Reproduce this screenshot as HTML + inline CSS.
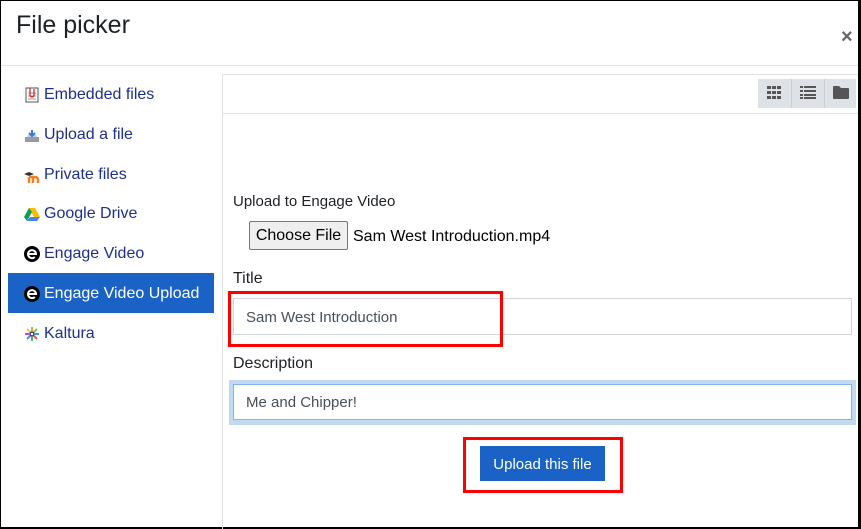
<!DOCTYPE html>
<html><head><meta charset="utf-8"><style>
*{box-sizing:border-box;margin:0;padding:0}
body{width:861px;height:529px;background:#fff;font-family:"Liberation Sans",Arial,sans-serif;position:relative;overflow:hidden;color:#1d2125}
.a{position:absolute}
.frame{left:0;top:0;width:861px;height:529px;border-left:1px solid #000;border-top:1px solid #000;border-right:3px solid #000;border-bottom:2px solid #000}
.nav{left:8px;width:206px;height:40px;font-size:16px;color:#1d2f8f;line-height:42px;padding-left:36px}
.nav.sel{background:#1a62c5;color:#fff}
.ic{position:absolute;left:16px;top:13px;width:16px;height:16px}
.lbl{font-size:15px;color:#1d2125}
</style></head><body>
<div class="a frame"></div>
<div class="a" style="left:16px;top:11px;font-size:25px;color:#1d2125">File picker</div>
<div class="a" style="left:841px;top:26px;font-size:20px;font-weight:bold;color:#666">×</div>
<div class="a" style="left:1px;top:65px;width:857px;height:1px;background:#dee2e6"></div>

<div class="a nav" style="top:74px"><svg class="ic" viewBox="0 0 16 16"><rect x="2" y="1" width="12" height="14" fill="#fff" stroke="#555"/><path d="M4 6h8M4 9h8M4 12h8" stroke="#999"/><path d="M6 1v7a2 2 0 0 0 4 0V2" fill="none" stroke="#d22" stroke-width="1.3"/></svg>Embedded files</div>
<div class="a nav" style="top:114px"><svg class="ic" viewBox="0 0 16 16"><path d="M1 10h14v5H1z" fill="#99a"/><path d="M3 10l2-4h6l2 4" fill="#ccd"/><path d="M8 3v6M5 6l3 3 3-3" stroke="#3a7bd5" stroke-width="2" fill="none"/></svg>Upload a file</div>
<div class="a nav" style="top:154px"><svg class="ic" viewBox="0 0 16 16"><path d="M0 7l5-2 5 2-5 2z" fill="#333"/><path d="M5 10v6M5 10h6a3 3 0 0 1 3 3v3M9 10v6" stroke="#f47f20" stroke-width="2.4" fill="none"/></svg>Private files</div>
<div class="a nav" style="top:193px"><svg class="ic" viewBox="0 0 16 16"><path d="M5 2h6l5 9H10z" fill="#fbbc04"/><path d="M5 2l-5 9 3 4 5-9z" fill="#0f9d58"/><path d="M3 15h10l3-4H6z" fill="#4285f4"/></svg>Google Drive</div>
<div class="a nav" style="top:233px"><svg class="ic" viewBox="0 0 16 16"><circle cx="8" cy="8" r="8" fill="#000"/><path d="M4 8h8a4 4 0 1 0-1.2 3" stroke="#fff" stroke-width="2" fill="none"/></svg>Engage Video</div>
<div class="a nav sel" style="top:273px"><svg class="ic" viewBox="0 0 16 16"><circle cx="8" cy="8" r="8" fill="#000"/><path d="M4 8h8a4 4 0 1 0-1.2 3" stroke="#fff" stroke-width="2" fill="none"/></svg>Engage Video Upload</div>
<div class="a nav" style="top:313px"><svg class="ic" viewBox="0 0 16 16"><g stroke-width="2"><path d="M8 1v4" stroke="#e94"/><path d="M8 11v4" stroke="#4b6"/><path d="M1 8h4" stroke="#c4d"/><path d="M11 8h4" stroke="#49c"/><path d="M3 3l3 3" stroke="#ec3"/><path d="M13 13l-3-3" stroke="#e54"/><path d="M13 3l-3 3" stroke="#6c4"/><path d="M3 13l3-3" stroke="#58d"/></g><circle cx="8" cy="8" r="2" fill="none" stroke="#247" stroke-width="1.5"/></svg>Kaltura</div>

<div class="a" style="left:222px;top:74px;width:1px;height:455px;background:#dee2e6"></div>
<div class="a" style="left:222px;top:74px;width:636px;height:1px;background:#dee2e6"></div>
<div class="a" style="left:222px;top:113px;width:636px;height:1px;background:#dee2e6"></div>
<div class="a" style="left:758px;top:79px;width:98px;height:29px;background:#dee2e6"></div>
<div class="a" style="left:791px;top:79px;width:1px;height:29px;background:#ccd0d4"></div>
<div class="a" style="left:824px;top:79px;width:1px;height:29px;background:#ccd0d4"></div>
<svg class="a" style="left:767px;top:86px" width="15" height="13" viewBox="0 0 15 13" fill="#555"><rect x="0" y="0" width="4" height="3"/><rect x="5" y="0" width="4" height="3"/><rect x="10" y="0" width="4" height="3"/><rect x="0" y="5" width="4" height="3"/><rect x="5" y="5" width="4" height="3"/><rect x="10" y="5" width="4" height="3"/><rect x="0" y="10" width="4" height="3"/><rect x="5" y="10" width="4" height="3"/><rect x="10" y="10" width="4" height="3"/></svg>
<svg class="a" style="left:800px;top:86px" width="16" height="13" viewBox="0 0 16 13" fill="#555"><rect x="0" y="0" width="3" height="2"/><rect x="4" y="0" width="12" height="2"/><rect x="0" y="4" width="3" height="2"/><rect x="4" y="4" width="12" height="2"/><rect x="0" y="8" width="3" height="2"/><rect x="4" y="8" width="12" height="2"/><rect x="0" y="11" width="3" height="2"/><rect x="4" y="11" width="12" height="2"/></svg>
<svg class="a" style="left:833px;top:85px" width="16" height="14" viewBox="0 0 16 14" fill="#555"><path d="M0 2a1 1 0 0 1 1-1h5l2 2h7a1 1 0 0 1 1 1v9a1 1 0 0 1-1 1H1a1 1 0 0 1-1-1z"/></svg>

<div class="a lbl" style="left:233px;top:193px">Upload to Engage Video</div>
<div class="a" style="left:249px;top:221px;width:99px;height:29px;background:#efefef;border:1px solid #767676;border-radius:2px;font-size:16px;line-height:28px;text-align:center;color:#000">Choose File</div>
<div class="a" style="left:353px;top:228px;font-size:16px;color:#000">Sam West Introduction.mp4</div>

<div class="a lbl" style="left:233px;top:270px;font-size:16px">Title</div>
<div class="a" style="left:233px;top:298px;width:619px;height:37px;border:1px solid #ced4da;font-size:15px;line-height:37px;padding-left:12px;color:#495057">Sam West Introduction</div>
<div class="a" style="left:228px;top:291px;width:275px;height:56px;border:3px solid #f00"></div>

<div class="a lbl" style="left:233px;top:355px;font-size:16px">Description</div>
<div class="a" style="left:229px;top:380px;width:627px;height:45px;background:#c1d9f3"></div>
<div class="a" style="left:233px;top:384px;width:619px;height:36px;border:1px solid #86b1ec;background:#fff;font-size:15px;line-height:36px;padding-left:12px;color:#495057">Me and Chipper!</div>

<div class="a" style="left:480px;top:446px;width:125px;height:35px;background:#1a62c5;color:#fff;font-size:15px;line-height:37px;text-align:center">Upload this file</div>
<div class="a" style="left:463px;top:437px;width:160px;height:56px;border:3px solid #f00"></div>
</body></html>
